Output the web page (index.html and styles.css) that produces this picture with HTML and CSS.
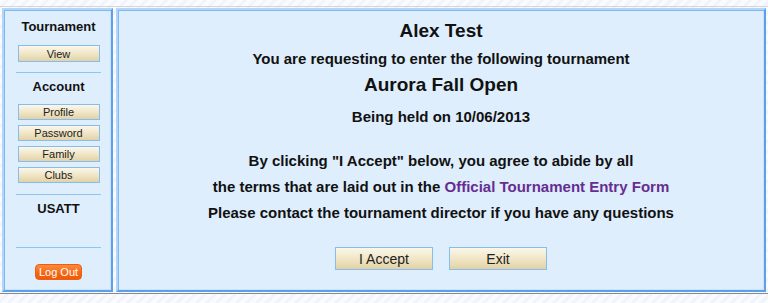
FILE: index.html
```html
<!DOCTYPE html>
<html lang="en">
<head>
    <meta charset="UTF-8">
    <title>Tournament Entry</title>
    <link rel="stylesheet" href="styles.css">
</head>
<body>

<div class="page">
    <div class="top-rule"></div>

    <div class="main">
        <!--左侧菜单-->
        <div class="side panel">
            <h3 class="side-title first">Tournament</h3>
            <a href="#" class="btn side-btn first-btn">View</a>

            <div class="sep"></div>

            <h3 class="side-title">Account</h3>
            <div class="side-list">
                <a href="#" class="btn side-btn">Profile</a>
                <a href="#" class="btn side-btn">Password</a>
                <a href="#" class="btn side-btn">Family</a>
                <a href="#" class="btn side-btn">Clubs</a>
            </div>

            <div class="sep sep2"></div>

            <h3 class="side-title">USATT</h3>

            <div class="sep sep3"></div>

            <a href="#" class="logout">Log Out</a>
        </div>

        <!--中间内容-->
        <div class="content panel">
            <div class="big name">Alex Test</div>
            <div class="line req">You are requesting to enter the following tournament</div>
            <div class="big">Aurora Fall Open</div>
            <div class="line held">Being held on 10/06/2013</div>

            <div class="terms">
                <div class="line">By clicking "I Accept" below, you agree to abide by all</div>
                <div class="line">the terms that are laid out in the <a href="#" class="link">Official Tournament Entry Form</a></div>
                <div class="line">Please contact the tournament director if you have any questions</div>
            </div>

            <div class="actions">
                <a href="#" class="btn big-btn">I Accept</a>
                <a href="#" class="btn big-btn">Exit</a>
            </div>
        </div>
    </div>

    <div class="bottom-rule"></div>
</div>

</body>
</html>
```

FILE: styles.css
```css
* {
    margin: 0;
    padding: 0;
    box-sizing: border-box;
}

body {
    font-family: "Liberation Sans", Arial, sans-serif;
    color: #111;
    background-color: #f6f8fc;
    background-image: repeating-linear-gradient(135deg, #fafbfe 0, #fafbfe 4px, #f1f4fa 4px, #f1f4fa 7px);
}

.page {
    padding-top: 6px;
}

.top-rule {
    height: 1px;
    background-color: #d3d6dc;
    margin-bottom: 1px;
}

.bottom-rule {
    height: 1px;
    margin-top: 1px;
    background-color: #8a8a8a;
}

.main {
    display: flex;
    gap: 3px;
    padding: 0 2px;
    height: 284px;
}

.panel {
    background-color: #deeefd;
    border: 2px solid;
    border-color: #b3d6f8 #5d9fe9 #5d9fe9 #b3d6f8;
    box-shadow: inset 1px 1px 0 #7fb8f0, inset -1px -1px 0 #c9e2fb;
}

/*左侧*/
.side {
    width: 111px;
    padding: 7px 10px 0 12px;
    display: flex;
    flex-direction: column;
    align-items: center;
}

.side-title {
    width: 100%;
    font-size: 13px;
    line-height: 20px;
    text-align: center;
    margin-top: 4px;
}

.side-title.first {
    margin-top: 0;
}

.sep {
    width: 100%;
    height: 1px;
    background-color: #8ec4f2;
    margin-top: 10px;
}

.sep2 {
    margin-top: 11px;
}

.sep3 {
    margin-top: 28px;
}

.side-list {
    display: flex;
    flex-direction: column;
    gap: 5px;
    margin-top: 7px;
}

.btn {
    display: flex;
    justify-content: center;
    align-items: center;
    color: #222;
    text-decoration: none;
    border: 1px solid #86bdf1;
    background: linear-gradient(#fbf7ea, #efe4c4 55%, #e2d2a4);
}

.side-btn {
    width: 82px;
    height: 16px;
    font-size: 11px;
}

.first-btn {
    height: 17px;
    margin-top: 8px;
}

.logout {
    margin-top: 16px;
    width: 47px;
    height: 16px;
    border-radius: 4px;
    display: flex;
    justify-content: center;
    align-items: center;
    font-size: 11px;
    color: #fff;
    text-decoration: none;
    background: linear-gradient(#ff8a3c, #f56512 60%, #f05a08);
    border: 1px solid #e9600f;
}

/*右侧*/
.content {
    flex: 1;
    padding-top: 8px;
    text-align: center;
    font-weight: bold;
}

.big {
    font-size: 19px;
    line-height: 26px;
}

.line {
    font-size: 15px;
    line-height: 26px;
}

.req {
    margin-top: 2px;
}

.held {
    margin-top: 6px;
}

.terms {
    margin-top: 18px;
}

.link {
    color: #662d91;
    text-decoration: none;
}

.actions {
    display: flex;
    justify-content: center;
    gap: 16px;
    margin-top: 21px;
    font-weight: normal;
}

.big-btn {
    width: 98px;
    height: 23px;
    font-size: 14px;
}
```
